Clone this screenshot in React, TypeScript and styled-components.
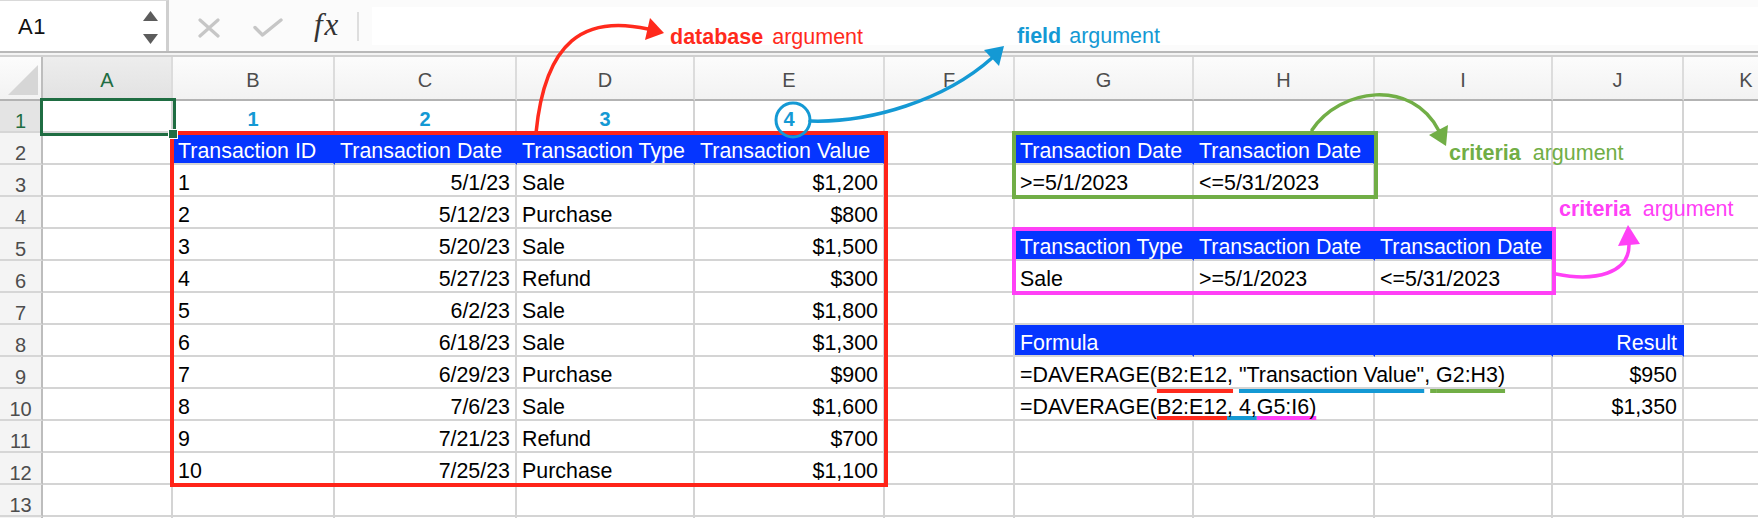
import React from "react";
import styled, { createGlobalStyle } from "styled-components";

const BLUE = "#0535ff";
const GRID = "#d4d4d4";
const SEL = "#1f6d42";
const RED = "#ff2a1c";
const CYAN = "#1499d4";
const GREEN = "#71ae46";
const MAGENTA = "#ff40f6";

const COLS = ["A", "B", "C", "D", "E", "F", "G", "H", "I", "J", "K"];
const WIDTHS = [130, 162, 182, 178, 190, 130, 179, 181, 178, 131, 126];
const ROW_COUNT = 14;
const LABELLED_ROWS = 13;

const GlobalStyle = createGlobalStyle`
  html, body { margin: 0; padding: 0; background: #fff; }
  body { font-family: "Liberation Sans", Arial, sans-serif; overflow: hidden; }
  *, *::before, *::after { box-sizing: border-box; }
`;

const Page = styled.div`
  position: relative;
  width: 1758px;
  height: 518px;
  overflow: hidden;
  background: #fff;
`;

/* ---------- formula bar ---------- */
const Toolbar = styled.div`
  display: flex;
  align-items: stretch;
  height: 53px;
  background: #fbfbfb;
  border-bottom: 2px solid #b9b9b9;
`;

const NameBox = styled.div`
  flex: none;
  width: 169px;
  display: flex;
  align-items: center;
  justify-content: space-between;
  padding: 2px 8px 0 18px;
  background: #fff;
  border-top: 1px solid #d9d9d9;
  border-right: 3px solid #cfcfcf;
`;

const CellRef = styled.span`
  font-size: 22px;
  letter-spacing: 0.6px;
  color: #111;
`;

const ToolIcon = styled.svg<{ $gap: number }>`
  flex: none;
  align-self: center;
  margin: 4px 0 0 ${(p) => p.$gap}px;
`;

const FxMark = styled.span`
  flex: none;
  align-self: center;
  margin: 0 0 0 31px;
  padding-bottom: 2px;
  font-family: "Liberation Serif", "Times New Roman", serif;
  font-style: italic;
  font-size: 31px;
  line-height: 1;
  letter-spacing: 2px;
  color: #333;
`;

const ToolDivider = styled.div`
  flex: none;
  align-self: center;
  width: 2px;
  height: 29px;
  margin: 2px 0 0 17px;
  background: #dedede;
`;

const FormulaInput = styled.div`
  flex: 1;
  margin: 7px 0 6px 13px;
  background: #fff;
`;

const Strip = styled.div`
  height: 4px;
  background: #f4f4f4;
  border-bottom: 2px solid #d0d0d0;
`;

/* ---------- sheet grid ---------- */
const Sheet = styled.div`
  display: grid;
  grid-template-columns: 43px ${WIDTHS.map((w) => `${w}px`).join(" ")};
  grid-template-rows: 44px repeat(${ROW_COUNT}, 32px);
  width: max-content;
`;

const Corner = styled.div`
  grid-column: 1;
  grid-row: 1;
  display: flex;
  align-items: flex-end;
  justify-content: flex-end;
  padding: 0 3px 4px 0;
  background: linear-gradient(#fcfcfc, #f2f2f2);
  border-right: 2px solid #bdbdbd;
  border-bottom: 2px solid #b3b3b3;
`;

const ColHead = styled.div<{ $col: number; $active: boolean }>`
  grid-column: ${(p) => p.$col};
  grid-row: 1;
  display: flex;
  align-items: center;
  justify-content: center;
  padding-top: 4px;
  background: ${(p) =>
    p.$active ? "linear-gradient(#ededed, #e2e2e2)" : "linear-gradient(#fcfcfc, #f2f2f2)"};
  border-right: 2px solid #dcdcdc;
  border-bottom: 2px solid #b3b3b3;
  color: ${(p) => (p.$active ? SEL : "#4d4d4d")};
  font-size: 20px;
`;

const RowHead = styled.div<{ $row: number; $active: boolean }>`
  grid-column: 1;
  grid-row: ${(p) => p.$row};
  display: flex;
  align-items: flex-end;
  justify-content: center;
  background: ${(p) => (p.$active ? "#e4e4e4" : "#f4f4f4")};
  border-right: 2px solid #bdbdbd;
  border-bottom: 2px solid #d6d6d6;
  color: ${(p) => (p.$active ? SEL : "#4d4d4d")};
  font-size: 20px;
  line-height: 20px;
`;

type Align = "left" | "right" | "center";

const Cell = styled.div<{ $col: number; $row: number; $span: number; $fill?: string; $align: Align }>`
  grid-column: ${(p) => p.$col} / span ${(p) => p.$span};
  grid-row: ${(p) => p.$row};
  display: flex;
  align-items: flex-end;
  justify-content: ${(p) =>
    p.$align === "right" ? "flex-end" : p.$align === "center" ? "center" : "flex-start"};
  min-width: 0;
  padding: 0 5px 0 5px;
  background: ${(p) => p.$fill ?? "#fff"};
  border-right: 2px solid ${(p) => p.$fill ?? GRID};
  border-bottom: 2px solid ${GRID};
  color: ${(p) => (p.$fill ? "#fff" : "#000")};
  font-size: 21.4px;
  line-height: 23px;
  white-space: nowrap;
`;

const CellText = styled.span`
  display: inline;
`;

const IndexText = styled.span`
  font-family: "Liberation Sans", Arial, sans-serif;
  font-weight: 700;
  font-size: 20px;
  line-height: 16px;
  color: ${CYAN};
`;

const Arg = styled.span<{ $c: string; $off: number }>`
  position: relative;
  z-index: 1;
  text-decoration: underline;
  text-decoration-color: ${(p) => p.$c};
  text-decoration-thickness: 4px;
  text-underline-offset: ${(p) => p.$off}px;
  text-decoration-skip-ink: none;
`;

const RangeFrame = styled.div<{ $cols: string; $rows: string; $color: string }>`
  grid-column: ${(p) => p.$cols};
  grid-row: ${(p) => p.$rows};
  margin: -2px -3px -2px -3px;
  border: 4px solid ${(p) => p.$color};
  z-index: 2;
  pointer-events: none;
`;

const Selection = styled.div<{ $cols: string; $rows: string }>`
  grid-column: ${(p) => p.$cols};
  grid-row: ${(p) => p.$rows};
  position: relative;
  margin: -3px;
  border: 3px solid ${SEL};
  z-index: 3;
  pointer-events: none;

  &::after {
    content: "";
    position: absolute;
    right: -5px;
    bottom: -6px;
    width: 10px;
    height: 10px;
    background: ${SEL};
    border: 1.5px solid #fff;
  }
`;

/* ---------- annotations ---------- */
const Overlay = styled.svg`
  position: absolute;
  left: 0;
  top: 0;
  width: 1758px;
  height: 518px;
  z-index: 5;
  pointer-events: none;
`;

const Note = styled.div<{ $x: number; $y: number; $color: string }>`
  position: absolute;
  left: ${(p) => p.$x}px;
  top: ${(p) => p.$y}px;
  z-index: 6;
  color: ${(p) => p.$color};
  font-family: "Liberation Sans", Arial, sans-serif;
  font-size: 21.5px;
  line-height: 24px;
  white-space: nowrap;
`;

const NoteKey = styled.span<{ $gap: number }>`
  font-weight: 700;
  margin-right: ${(p) => p.$gap}px;
`;

/* ---------- data ---------- */
interface Spec {
  content: React.ReactNode;
  align?: Align;
  fill?: boolean;
  span?: number;
}

const TRANSACTIONS: [string, string, string, string][] = [
  ["1", "5/1/23", "Sale", "$1,200"],
  ["2", "5/12/23", "Purchase", "$800"],
  ["3", "5/20/23", "Sale", "$1,500"],
  ["4", "5/27/23", "Refund", "$300"],
  ["5", "6/2/23", "Sale", "$1,800"],
  ["6", "6/18/23", "Sale", "$1,300"],
  ["7", "6/29/23", "Purchase", "$900"],
  ["8", "7/6/23", "Sale", "$1,600"],
  ["9", "7/21/23", "Refund", "$700"],
  ["10", "7/25/23", "Purchase", "$1,100"],
];

function buildSpecs(): Record<string, Spec> {
  const s: Record<string, Spec> = {};
  ["B", "C", "D", "E"].forEach((c, i) => {
    s[`${c}1`] = { content: <IndexText>{i + 1}</IndexText>, align: "center" };
  });
  const head = ["Transaction ID", "Transaction Date", "Transaction Type", "Transaction Value"];
  ["B", "C", "D", "E"].forEach((c, i) => {
    s[`${c}2`] = { content: head[i], fill: true };
  });
  TRANSACTIONS.forEach((d, i) => {
    const r = i + 3;
    s[`B${r}`] = { content: d[0] };
    s[`C${r}`] = { content: d[1], align: "right" };
    s[`D${r}`] = { content: d[2] };
    s[`E${r}`] = { content: d[3], align: "right" };
  });

  s.G2 = { content: "Transaction Date", fill: true };
  s.H2 = { content: "Transaction Date", fill: true };
  s.G3 = { content: ">=5/1/2023" };
  s.H3 = { content: "<=5/31/2023" };

  s.G5 = { content: "Transaction Type", fill: true };
  s.H5 = { content: "Transaction Date", fill: true };
  s.I5 = { content: "Transaction Date", fill: true };
  s.G6 = { content: "Sale" };
  s.H6 = { content: ">=5/1/2023" };
  s.I6 = { content: "<=5/31/2023" };

  s.G8 = { content: "Formula", fill: true };
  s.H8 = { content: "", fill: true };
  s.I8 = { content: "", fill: true };
  s.J8 = { content: "Result", fill: true, align: "right" };

  s.G9 = {
    span: 3,
    content: (
      <>
        =DAVERAGE(
        <Arg $c={RED} $off={7}>
          B2:E12,
        </Arg>{" "}
        <Arg $c={CYAN} $off={7}>
          "Transaction Value"
        </Arg>
        ,
        <Arg $c={GREEN} $off={7}>
          {" "}G2:H3)
        </Arg>
      </>
    ),
  };
  s.J9 = { content: "$950", align: "right" };

  s.G10 = {
    span: 2,
    content: (
      <>
        =DAVERAGE(
        <Arg $c={RED} $off={2}>
          B2:E12
        </Arg>
        <Arg $c={CYAN} $off={2}>
          , 4,
        </Arg>
        <Arg $c={MAGENTA} $off={2}>
          G5:I6)
        </Arg>
      </>
    ),
  };
  s.J10 = { content: "$1,350", align: "right" };
  return s;
}

const SPECS = buildSpecs();

function renderCells() {
  const out: React.ReactNode[] = [];
  for (let r = 1; r <= ROW_COUNT; r++) {
    let ci = 0;
    while (ci < COLS.length) {
      const ref = `${COLS[ci]}${r}`;
      const spec = SPECS[ref];
      const span = spec?.span ?? 1;
      out.push(
        <Cell
          key={ref}
          $col={ci + 2}
          $row={r + 1}
          $span={span}
          $align={spec?.align ?? "left"}
          $fill={spec?.fill ? BLUE : undefined}
        >
          {spec ? <CellText>{spec.content}</CellText> : null}
        </Cell>
      );
      ci += span;
    }
  }
  return out;
}

export default function App() {
  const rows = Array.from({ length: ROW_COUNT }, (_, i) => i + 1);
  return (
    <>
      <GlobalStyle />
      <Page>
        <Toolbar>
          <NameBox>
            <CellRef>A1</CellRef>
            <svg width="15" height="33" viewBox="0 0 15 33">
              <polygon points="0,10 7.5,0 15,10" fill="#5c5c5c" />
              <polygon points="0,23 15,23 7.5,33" fill="#5c5c5c" />
            </svg>
          </NameBox>
          <ToolIcon $gap={29} width="22" height="20" viewBox="0 0 22 20">
            <path d="M2 2 L20 18 M20 2 L2 18" stroke="#c6c6c6" strokeWidth="3.2" strokeLinecap="round" fill="none" />
          </ToolIcon>
          <ToolIcon $gap={33} width="30" height="19" viewBox="0 0 30 19">
            <path
              d="M2 9.5 L9.5 17 L28 2"
              stroke="#c6c6c6"
              strokeWidth="3.4"
              strokeLinecap="round"
              strokeLinejoin="round"
              fill="none"
            />
          </ToolIcon>
          <FxMark>fx</FxMark>
          <ToolDivider />
          <FormulaInput />
        </Toolbar>
        <Strip />
        <Sheet>
          <Corner>
            <svg width="30" height="30" viewBox="0 0 30 30">
              <polygon points="0,30 30,0 30,30" fill="#d6d6d6" />
            </svg>
          </Corner>
          {COLS.map((c, i) => (
            <ColHead key={c} $col={i + 2} $active={c === "A"}>
              {c}
            </ColHead>
          ))}
          {rows.map((r) => (
            <RowHead key={r} $row={r + 1} $active={r === 1}>
              {r <= LABELLED_ROWS ? r : null}
            </RowHead>
          ))}
          {renderCells()}
          <RangeFrame $cols="3 / 7" $rows="3 / 14" $color="#ff2419" />
          <RangeFrame $cols="8 / 10" $rows="3 / 5" $color={GREEN} />
          <RangeFrame $cols="8 / 11" $rows="6 / 8" $color={MAGENTA} />
          <Selection $cols="2 / 3" $rows="2 / 3" />
        </Sheet>

        <Overlay viewBox="0 0 1758 518">
          <g fill="none" strokeWidth="3.5" strokeLinecap="round">
            <path d="M536 133 C545 40 585 15 648 29" stroke={RED} />
            <circle cx="793" cy="120" r="17" stroke={CYAN} strokeWidth="3" />
            <path d="M810 121 C870 123 945 100 992 58" stroke={CYAN} />
            <path d="M1312 130 C1340 88 1412 78 1439 131" stroke={GREEN} />
            <path d="M1556 274 C1596 282 1629 273 1629 245" stroke={MAGENTA} />
          </g>
          <polygon points="664,33 650,18 645,40" fill={RED} />
          <polygon points="1004,46 999,66 984,50" fill={CYAN} />
          <polygon points="1446,146 1448,125 1429,135" fill={GREEN} />
          <polygon points="1628,225 1618,246 1640,244" fill={MAGENTA} />
        </Overlay>

        <Note $x={670} $y={24.5} $color={RED}>
          <NoteKey $gap={3}>database</NoteKey> argument
        </Note>
        <Note $x={1017} $y={23.5} $color={CYAN}>
          <NoteKey $gap={2}>field</NoteKey> argument
        </Note>
        <Note $x={1449} $y={140.5} $color={GREEN}>
          <NoteKey $gap={6}>criteria</NoteKey> argument
        </Note>
        <Note $x={1559} $y={197} $color={MAGENTA}>
          <NoteKey $gap={6}>criteria</NoteKey> argument
        </Note>
      </Page>
    </>
  );
}
